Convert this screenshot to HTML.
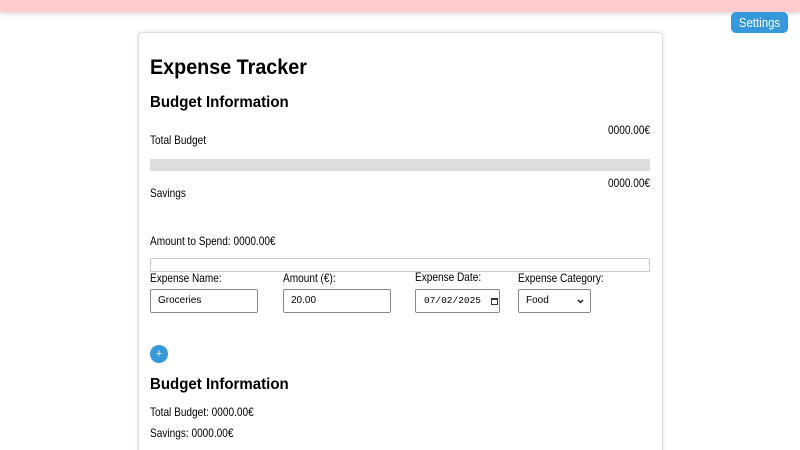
<!DOCTYPE html>
<html style="width:800px;height:450px;overflow:hidden"><head><meta charset="utf-8"><style>
*{box-sizing:border-box;margin:0;padding:0}
html,body{width:800px;height:450px;overflow:hidden}
body{background:#fff;font-family:"Liberation Sans",Arial,sans-serif;color:#000;position:relative}
.a{position:absolute;white-space:nowrap}
.top{left:0;top:0;width:800px;height:12px;background:#ffcdcd;box-shadow:0 2px 4px rgba(0,0,0,0.15)}
.set{left:731px;top:12px;width:57px;height:21px;background:#3498db;color:#fff;border-radius:5px;font-size:13px;line-height:21px;text-align:center}
.card{left:138px;top:32px;width:525px;height:430px;border:1px solid #ddd;border-radius:4px;box-shadow:0 0 5px rgba(0,0,0,0.12)}
.t{font-size:12px;transform:scaleX(.84);transform-origin:left}
.r{transform-origin:right}
.h{transform:scaleX(.94);transform-origin:left;font-weight:bold}
.inp{border:1px solid #888;border-radius:2px;height:24px;font-size:10px;line-height:22px;padding-left:7px;background:#fff}
.set span{display:inline-block;transform:scaleX(.88)}
</style></head><body>
<div class="a top"></div>
<div class="a set"><span>Settings</span></div>
<div class="a card"></div>
<div class="a h" style="left:150px;top:56px;font-size:21px">Expense Tracker</div>
<div class="a h" style="left:150px;top:94px;font-size:16px">Budget Information</div>
<div class="a t r" style="right:150px;top:123px">0000.00€</div>
<div class="a t" style="left:150px;top:133px">Total Budget</div>
<div class="a" style="left:150px;top:159px;width:500px;height:12px;background:#ddd"></div>
<div class="a t r" style="right:150px;top:176px">0000.00€</div>
<div class="a t" style="left:150px;top:186px">Savings</div>
<div class="a t" style="left:150px;top:234px">Amount to Spend: 0000.00€</div>
<div class="a" style="left:150px;top:258px;width:500px;height:14px;border:1px solid #ccc"></div>
<div class="a t" style="left:150px;top:271px">Expense Name:</div>
<div class="a t" style="left:283px;top:271px">Amount (€):</div>
<div class="a t" style="left:415px;top:270px">Expense Date:</div>
<div class="a t" style="left:518px;top:271px">Expense Category:</div>
<div class="a inp" style="left:150px;top:289px;width:108px">Groceries</div>
<div class="a inp" style="left:283px;top:289px;width:108px">20.00</div>
<div class="a inp" style="left:415px;top:289px;width:85px;font-family:'Liberation Mono',monospace;font-size:9.5px;padding-left:8px">07/02/2025<span style="position:absolute;left:75px;top:8px;width:7px;height:7px;border:1px solid #333;border-top-width:2px"></span></div>
<div class="a inp" style="left:518px;top:289px;width:73px">Food<svg style="position:absolute;right:6px;top:9px" width="7" height="5" viewBox="0 0 7 5"><path d="M1 1 L3.5 3.5 L6 1" stroke="#222" stroke-width="1.5" fill="none"/></svg></div>
<div class="a" style="left:150px;top:345px;width:18px;height:18px;border-radius:50%;background:#3498db;color:#fff;font-size:11px;line-height:18px;text-align:center">+</div>
<div class="a h" style="left:150px;top:376px;font-size:16px">Budget Information</div>
<div class="a t" style="left:150px;top:405px">Total Budget: 0000.00€</div>
<div class="a t" style="left:150px;top:426px">Savings: 0000.00€</div>
</body></html>
